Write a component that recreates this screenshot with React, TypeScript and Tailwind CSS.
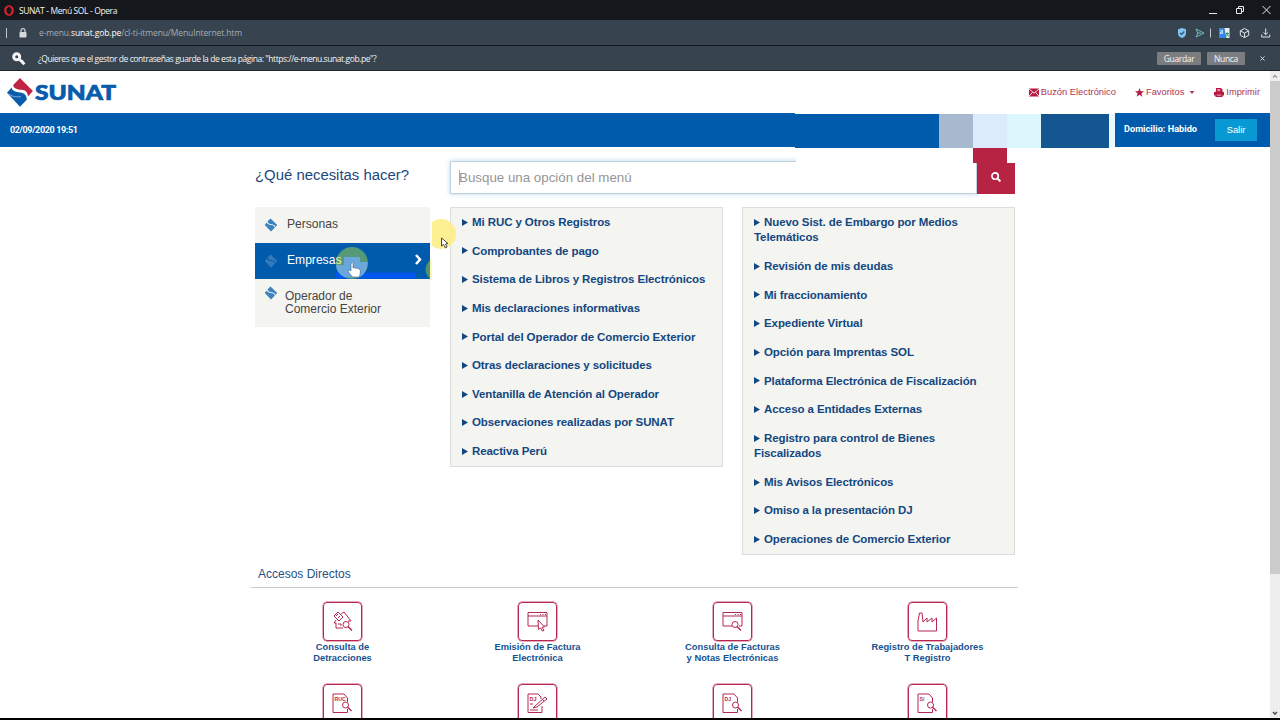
import type { ReactNode } from 'react';

const leftMenu = [
  'Mi RUC y Otros Registros',
  'Comprobantes de pago',
  'Sistema de Libros y Registros Electrónicos',
  'Mis declaraciones informativas',
  'Portal del Operador de Comercio Exterior',
  'Otras declaraciones y solicitudes',
  'Ventanilla de Atención al Operador',
  'Observaciones realizadas por SUNAT',
  'Reactiva Perú',
];

const rightMenu = [
  'Nuevo Sist. de Embargo por Medios\nTelemáticos',
  'Revisión de mis deudas',
  'Mi fraccionamiento',
  'Expediente Virtual',
  'Opción para Imprentas SOL',
  'Plataforma Electrónica de Fiscalización',
  'Acceso a Entidades Externas',
  'Registro para control de Bienes\nFiscalizados',
  'Mis Avisos Electrónicos',
  'Omiso a la presentación DJ',
  'Operaciones de Comercio Exterior',
];

function Diamond({ className }: { className: string }) {
  return (
    <svg viewBox="0 0 12 14" className={className} fill="currentColor">
      <path d="M5.500 0.500 L12.200 7 L10.400 9 C10 7 8.500 6.600 6.500 6.300 C4.500 6 3.200 5.300 2.400 3.600 Z" />
      <path d="M-0.200 7 L1.600 4.600 C2.200 6.400 4 6.800 6 7.100 C8.200 7.400 9.400 8.100 9.800 9.700 L6 13.600 Z" />
    </svg>
  );
}

function TitleBar() {
  return (
    <div className="flex h-5 items-center justify-between bg-[#14181c] pr-[9px] pl-1">
      <div className="flex items-center gap-[5px]">
        <svg viewBox="0 0 10 11" className="h-[11px] w-2.5">
          <ellipse cx="5" cy="5.500" rx="3.700" ry="4.200" fill="none" stroke="#e0202c" strokeWidth="2.200" />
          <ellipse cx="5" cy="5.500" rx="1.900" ry="3.700" fill="#14181c" />
        </svg>
        <span className="mt-px text-[8.500px] leading-[19px] tracking-[-0.380px] text-[#f2f4f5]">SUNAT - Menú SOL - Opera</span>
      </div>
      <svg viewBox="0 0 64 12" className="h-3 w-16" fill="none" stroke="#e8eaec" strokeWidth="1">
        <path d="M2 9.500 H10" />
        <path d="M29.500 4.500 h5 v5 h-5 Z M31.500 4.500 V2.500 h5 v5 h-2" />
        <path d="M55.500 2 L63.500 10 M63.500 2 L55.500 10" />
      </svg>
    </div>
  );
}

function AddressBar() {
  return (
    <div className="flex h-[26px] items-center justify-between border-b border-[#11171d] bg-[#37434e] pr-[9px] pl-1.5">
      <div className="flex items-center">
        <div className="h-2.5 w-px bg-[#c3c9ce]" />
        <svg viewBox="0 0 8 10" className="ml-3 h-2.5 w-2">
          <rect x="0.500" y="4" width="7" height="5.500" rx="0.800" fill="#d5dadd" />
          <path d="M2 4 V2.600 a2 2 0 0 1 4 0 V4" fill="none" stroke="#d5dadd" strokeWidth="1.200" />
        </svg>
        <span className="ml-[12px] text-[8.500px] leading-[25px] tracking-[-0.120px] text-[#a5adb5]">
          e-menu.<span className="text-white">sunat.gob.pe</span>/cl-ti-itmenu/MenuInternet.htm
        </span>
      </div>
      <svg viewBox="0 0 94 12" className="h-3 w-[94px]" fill="none">
        <path d="M5 1 L9 2.200 V6 C9 8.800 7.500 10 5 11 C2.500 10 1 8.800 1 6 V2.200 Z" fill="#80c6f5" />
        <path d="M3 6 L4.600 7.500 L7.300 4.500" stroke="#284e70" strokeWidth="1.200" />
        <path d="M19 2 L27 6 L19 10 L20.800 6 Z M20.800 6 H24" stroke="#75b9c2" strokeWidth="1" />
        <path d="M33.500 1.500 V10.500" stroke="#c3c9ce" />
        <path d="M42 1 h5 l2 10 h-7 Z" fill="#3186ef" />
        <path d="M47.300 1 h5.200 v10 h-3.200 Z" fill="#e8edf0" />
        <path d="M43.500 3.500 h2 v3 h-2 v-1.500 h2" stroke="#d4e8ff" strokeWidth="0.900" />
        <path d="M48.700 6.500 h3.300 M50.200 5.200 v1.300 M51.200 6.500 L49 9.500 M49.300 7 L52 9.500" stroke="#36945b" strokeWidth="0.900" />
        <path d="M67.500 1.500 L71.700 3.800 V8.300 L67.500 10.600 L63.300 8.300 V3.800 Z M63.500 3.900 L67.500 6.100 L71.500 3.900 M67.500 6.100 V10.500" stroke="#dfe4e7" />
        <path d="M88.700 1.500 V7.500 M86.500 5.500 L88.700 7.700 L90.900 5.500 M84.700 7.500 V10 H92.700 V7.500" stroke="#dfe4e7" />
      </svg>
    </div>
  );
}

function PasswordBar() {
  return (
    <div className="flex h-[25px] items-center justify-between border-b border-[#1d252c] bg-[#37434e] pr-[15px] pl-3">
      <div className="flex items-center">
        <svg viewBox="0 0 14 14" className="mt-px h-3.5 w-3.5">
          <circle cx="4.700" cy="4.700" r="3" fill="none" stroke="#f3f5f6" strokeWidth="3" />
          <path d="M7 7 L12.500 12.300 M9 10.500 L11.500 9" stroke="#f3f5f6" strokeWidth="2.800" />
        </svg>
        <span className="mt-[2px] ml-[12px] text-[8.500px] leading-[22px] tracking-[-0.430px] whitespace-nowrap text-[#f3f5f6]">
          ¿Quieres que el gestor de contraseñas guarde la de esta página: "https://e-menu.sunat.gob.pe"?
        </span>
      </div>
      <div className="flex items-center text-[8.500px] tracking-[-0.350px] text-[#f3f3f3]">
        <button className="h-[13px] w-11 rounded-[1px] bg-[#7c7d80] leading-[13px]">Guardar</button>
        <button className="ml-1.5 h-[13px] w-[38px] rounded-[1px] bg-[#7c7d80] leading-[13px]">Nunca</button>
        <svg viewBox="0 0 5 5" className="ml-[15px] h-[5px] w-[5px]" stroke="#e1e5e8" strokeWidth="0.900">
          <path d="M0.500 0.500 L4.500 4.500 M4.500 0.500 L0.500 4.500" />
        </svg>
      </div>
    </div>
  );
}

function Header() {
  return (
    <header className="flex h-[42px] items-center justify-between pr-[10px] pl-[7px]">
      <div className="flex items-center">
        <svg viewBox="0 0 26 29" className="h-[29px] w-[26px]">
          <path d="M13 0 L25.900 12.900 L21 18.500 C20.500 14 18.500 12.200 14.500 11.800 C10 11.400 6.600 10.400 6.200 6.900 Z" fill="#c12442" />
          <path d="M0 14.700 L4.600 9.600 C5.300 13 8.500 14 13 14.500 C17.500 15 19.600 17 19.800 21.700 L13 28.800 Z" fill="#095bab" />
          <path d="M1.500 16 C5 18.800 10 19.200 14 18.700" fill="none" stroke="#fff" strokeWidth="0.800" opacity="0.600" />
        </svg>
        <span className="ml-[2px] inline-block w-[84px] origin-left scale-x-[1.195] font-['Lato',sans-serif] text-[20.500px] leading-[29px] font-black text-[#095bab] [-webkit-text-stroke:0.700px_#095bab]">SUNAT</span>
      </div>
      <nav className="mt-px flex items-center font-['Liberation_Sans',sans-serif] text-[9.330px] text-[#ad3654]">
        <span className="flex items-center">
          <svg viewBox="0 0 10 9" className="mr-[2px] h-[9px] w-2.5">
            <rect y="0.500" width="10" height="8" fill="#b7183f" />
            <path d="M0 0.800 L5 5.200 L10 0.800 M0 8.300 L3.500 4.300 M10 8.300 L6.500 4.300" fill="none" stroke="#fff" strokeWidth="0.900" />
          </svg>
          Buzón Electrónico
        </span>
        <span className="ml-[19px] flex items-center">
          <svg viewBox="0 0 10 10" className="mr-[2px] h-[9px] w-[9px]" fill="#b7183f">
            <path d="M5 0 L6.300 3.500 L10 3.700 L7.100 6 L8.100 9.700 L5 7.600 L1.900 9.700 L2.900 6 L0 3.700 L3.700 3.500 Z" />
          </svg>
          Favoritos
          <svg viewBox="0 0 6 4" className="ml-[5px] h-[3px] w-1.5" fill="#a9344f">
            <path d="M0 0 H6 L3 4 Z" />
          </svg>
        </span>
        <span className="ml-[19px] flex items-center">
          <svg viewBox="0 0 10 9" className="mr-[2px] h-[9px] w-2.5" fill="#b7183f">
            <path d="M2 0 H7 L8.500 1.500 V4 H2 Z M0 4.500 Q0 3.700 1 3.700 H9 Q10 3.700 10 4.500 V7.500 H8.500 V9 H1.500 V7.500 H0 Z" />
            <path d="M3.200 1 H6.300 V3.200 H3.200 Z M2.800 6.500 H7.200 V7.700 H2.800 Z" fill="#fff" opacity="0.500" />
          </svg>
          Imprimir
        </span>
      </nav>
    </header>
  );
}

function StatusBar() {
  return (
    <div className="flex h-[35px] items-start font-['Roboto',sans-serif] text-[9px] font-bold text-white">
      <div className="flex h-[34px] w-[795px] items-center bg-[#005bac] pt-px pl-2.5 tracking-[-0.370px]">02/09/2020 19:51</div>
      <div className="mt-px flex h-[34px]">
        <div className="w-36 bg-[#005bac]" />
        <div className="w-[34px] bg-[#a6b9ce]" />
        <div className="w-[34px] bg-[#dbebfb]" />
        <div className="w-[34px] bg-[#dbf6fd]" />
        <div className="w-[68px] bg-[#145790]" />
        <div className="w-[6px] bg-[#edf7ff]" />
      </div>
      <div className="flex h-[34px] grow items-center justify-between bg-[#005bac] pr-[13px] pl-[9px]">
        <span className="-mt-[3px] text-[9.200px]">Domicilio: Habido</span>
        <button className="h-[22px] w-[42px] bg-[#0898d3] pt-[2px] font-['Liberation_Sans',sans-serif] text-[9.330px] font-normal">Salir</button>
      </div>
    </div>
  );
}

function Sidebar() {
  return (
    <aside className="h-[120px] w-[175px] bg-[#f4f4f1] text-[12.100px] text-[#454545]">
      <div className="flex h-9 items-center pl-2.5">
        <Diamond className="h-3.5 w-3 text-[#3e82be]" />
        <span className="mb-[2px] ml-2.5">Personas</span>
      </div>
      <div className="relative flex h-9 items-center bg-[#005bac] pl-2.5 text-white">
        <Diamond className="h-3.5 w-3 text-[#347bb8]" />
        <span className="relative z-10 mb-[2px] ml-2.5">Empresa<span className="text-[#f5f59c]">s</span></span>
        <svg viewBox="0 0 7 11" className="mr-[8px] mb-[4px] ml-auto h-[11px] w-[7px]">
          <path d="M1 1 L5 5.500 L1 10" fill="none" stroke="#fff" strokeWidth="2.500" />
        </svg>
        <PointerMark />
      </div>
      <div className="flex h-12 items-start pl-2.5">
        <Diamond className="mt-[7px] h-3.5 w-3 text-[#3e82be]" />
        <span className="mt-[11px] ml-2 text-[12px] leading-[13px]">Operador de<br />Comercio Exterior</span>
      </div>
    </aside>
  );
}

function PointerMark() {
  return (
    <svg viewBox="0 0 100 42" className="absolute top-0 left-[80px] h-[42px] w-[100px]">
      <path d="M1 29.500 H81 V35.500 H1 Z" fill="#0057ef" />
      <circle cx="17" cy="20" r="16" fill="#559979" />
      <path d="M9 14 H25 V19 H32.500 Q33 30 24 34.500 L10 34.500 Q1 30 1 22 H9 Z" fill="#69a7dc" />
      <path d="M16 20 q1.500 -1 2 .5 V25 l1.500 -.5 l1.500 1 l1.500 -.5 l1 1 q2 0 2 2 l-1 6 h-7 l-4 -5 q-1 -2 .5 -2 l2 1 Z" fill="#fff" stroke="#36506b" strokeWidth="0.500" />
      <path d="M95 17 Q86 27 95 36 Z" fill="#4f946e" />
      <path d="M95 17 L97 15 V36 H95 Z" fill="#fcf8b0" />
    </svg>
  );
}

function MenuPanel({ items }: { items: string[] }) {
  return (
    <ul className="flex w-[273px] flex-col gap-[13.350px] border border-[#dcdddc] bg-[#f4f4f1] pt-[7px] pb-[6.500px] pl-[11px] text-[11.500px] leading-[15.300px] font-bold tracking-[-0.090px] text-[#134781]">
      {items.map((item) => (
        <li key={item} className="whitespace-pre">
          <svg viewBox="0 0 6 7" className="mr-[4px] inline-block h-[7px] w-1.5 align-[0.200px]" fill="currentColor">
            <path d="M0 0 L6 3.500 L0 7 Z" />
          </svg>
          {item}
        </li>
      ))}
    </ul>
  );
}

function Search() {
  return (
    <div className="relative flex h-[47px] items-start pt-[13px]">
      <div className="flex h-[33px] w-[527px] items-center border border-[#bed1de] bg-white pl-2 text-[13.330px] text-[#969696] shadow-[0_0_5px_#b9d7ed]">
        <div className="-mr-px h-[15px] w-px bg-[#a3adba]" />
        <span className="mt-px">Busque una opción del menú</span>
      </div>
      <button className="mt-[2px] flex h-[31px] w-[38px] items-center justify-center bg-[#b72342] pb-[3px]">
        <svg viewBox="0 0 11 11" className="h-[10px] w-[10px]" fill="none" stroke="#fff">
          <circle cx="4.500" cy="4.500" r="3.500" strokeWidth="1.800" />
          <path d="M7 7 L10.300 10.300" strokeWidth="2.200" />
        </svg>
      </button>
      <div className="absolute top-[6px] left-[346px] h-[9px] w-[181px] bg-white" />
      <div className="absolute top-0 left-[523px] h-[15px] w-[34px] bg-[#b72342]" />
      <svg viewBox="0 0 34 36" className="absolute top-[68px] -left-[18px] h-9 w-[34px]">
        <circle cx="9" cy="18" r="15" fill="#fbed80" fillOpacity="0.850" />
        <path d="M9.500 22 V30 L11.500 28.500 L13.500 32 L15 31 L13.500 28 L16 27.500 Z" fill="#fff" stroke="#333" strokeWidth="0.900" />
      </svg>
    </div>
  );
}

const deductionsArt = (
  <>
    <path d="M3 6 L7 2 L12 7 L8 11 Z M5 6 L7 4 M7 8 L9 6 M10 4 L13 2 L20 11 H17 M5 10 L3 13 H5 V18 H12 M7 14 H10 V16" />
    <circle cx="15" cy="14.500" r="3" />
    <path d="M17 16.500 L21 20.500" strokeWidth="1.500" />
  </>
);
const browserFrame = 'H2 V2.500 H21 V16 H18 M2 6 H21 M14 4.500 H15 M16.500 4.500 H17.500 M19 4.500 H20';
const invoiceArt = (
  <>
    <path d={`M12 16 ${browserFrame}`} />
    <path d="M12 10 L18.500 17 L16 17.300 L18 20.500 L16.300 21 L14.500 18 L12.500 19.500 Z" fill="#fff" />
  </>
);
const searchInvoiceArt = (
  <>
    <path d={`M11 16 ${browserFrame}`} />
    <circle cx="14" cy="14.500" r="3" />
    <path d="M16 16.500 L20 20.500" strokeWidth="1.500" />
  </>
);
const factoryArt = <path d="M2 21 V11 L3.500 3 H6 L7 12 L11 8 V12 L16 8 V12 L20.500 8 V21 Z" />;

function documentArt(label: string) {
  return (
    <>
      <path d="M16.500 17 V20.500 H2 V2 H13 L16.500 6 V10" />
      <text x="3.500" y="8.500" fontSize="5.200" fill="#b52850" stroke="none" fontWeight="bold">{label}</text>
      <circle cx="14.500" cy="13" r="3" />
      <path d="M16.500 15 L20.500 19" strokeWidth="1.500" />
    </>
  );
}

const declarationArt = (
  <>
    <path d="M16 14 V20.500 H2 V2 H12 L15 5 V7 M4 12 H7 M4 18 H12 M8 15 L19 5 L21 7 L11 15 L7 16 Z M16 7 L18 9" />
    <text x="3.500" y="9" fontSize="5.500" fill="#b52850" stroke="none" fontWeight="bold">DJ</text>
  </>
);

function Shortcut({ art, label }: { art: ReactNode; label?: string }) {
  return (
    <div className="flex h-[82px] w-[195px] flex-col items-center">
      <div className="flex h-[39px] w-[39px] shrink-0 items-center justify-center rounded-[4px] border border-[#b52850] shadow-[0_0_0_0.500px_#c95a79]">
        <svg viewBox="0 0 23 23" className="h-[23px] w-[23px]" fill="none" stroke="#b52850" strokeWidth="1">{art}</svg>
      </div>
      <span className="mt-px text-center text-[9.330px] leading-[10.600px] font-bold whitespace-pre text-[#155291]">{label}</span>
    </div>
  );
}

function Scrollbar() {
  return (
    <div className="flex w-2.5 flex-col items-center bg-[#eeeeee]">
      <svg viewBox="0 0 10 10" className="h-2.5 w-2.5"><path d="M3 6.500 L5 4.500 L7 6.500" fill="none" stroke="#999" strokeWidth="1.400" /></svg>
      <div className="h-[493px] w-full bg-[#cbcbcb]" />
      <svg viewBox="0 0 10 10" className="mt-auto h-2.5 w-2.5"><path d="M3 4 L5 6 L7 4" fill="none" stroke="#555" strokeWidth="1.600" /></svg>
    </div>
  );
}

export default function App() {
  return (
    <div className="flex h-[720px] w-[1280px] flex-col overflow-hidden border-b-2 border-black bg-white font-['Open_Sans',sans-serif]">
      <TitleBar />
      <AddressBar />
      <PasswordBar />
      <div className="flex min-h-0 grow">
        <div className="w-[1270px] overflow-hidden">
          <Header />
          <StatusBar />
          <main className="font-['Liberation_Sans',sans-serif]">
            <div className="flex gap-5 pl-[255px]">
              <div className="w-[175px]">
                <h1 className="mb-[8px] h-[51px] pt-[17px] text-[14.900px] leading-[21px] text-[#1d477e]">¿Qué necesitas hacer?</h1>
                <Sidebar />
              </div>
              <div className="w-[566px]">
                <Search />
                <div className="mt-3 flex items-start gap-[19px]">
                  <MenuPanel items={leftMenu} />
                  <MenuPanel items={rightMenu} />
                </div>
              </div>
            </div>
            <h2 className="ml-[251px] h-[33px] w-[767px] border-b border-[#cacaca] pt-[9px] pl-[7px] text-[12px] leading-5 text-[#264f82]">Accesos Directos</h2>
            <div className="mt-[14.600px] ml-[245px] grid w-[780px] grid-cols-4">
              <Shortcut art={deductionsArt} label={'Consulta de\nDetracciones'} />
              <Shortcut art={invoiceArt} label={'Emisión de Factura\nElectrónica'} />
              <Shortcut art={searchInvoiceArt} label={'Consulta de Facturas\ny Notas Electrónicas'} />
              <Shortcut art={factoryArt} label={'Registro de Trabajadores\nT Registro'} />
              <Shortcut art={documentArt('RUC')} />
              <Shortcut art={declarationArt} />
              <Shortcut art={documentArt('DJ')} />
              <Shortcut art={documentArt('S/')} />
            </div>
          </main>
        </div>
        <Scrollbar />
      </div>
    </div>
  );
}
